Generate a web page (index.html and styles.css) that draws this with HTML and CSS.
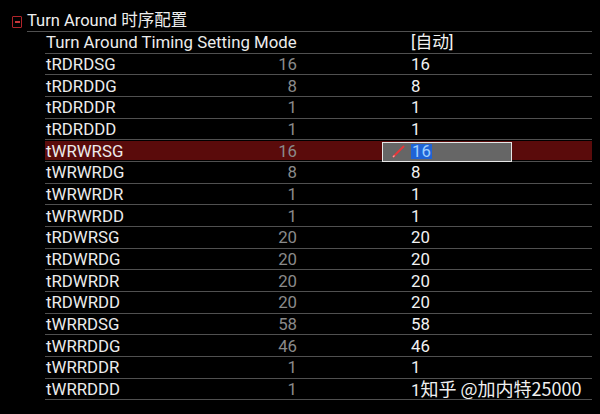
FILE: index.html
```html
<!DOCTYPE html>
<html>
<head>
<meta charset="utf-8">
<link rel="stylesheet" href="styles.css">
</head>
<body>
<div class="panel">
  <div class="title">
    <span class="fold"><span class="fold-bar"></span></span>
    <div class="title-text">Turn Around 时序配置</div>
  </div>
  <div class="rows">
    <div class="row"><span class="name">Turn Around Timing Setting Mode</span><span class="cur"></span><span class="val">[自动]</span></div>
    <div class="row"><span class="name">tRDRDSG</span><span class="cur">16</span><span class="val">16</span></div>
    <div class="row"><span class="name">tRDRDDG</span><span class="cur">8</span><span class="val">8</span></div>
    <div class="row"><span class="name">tRDRDDR</span><span class="cur">1</span><span class="val">1</span></div>
    <div class="row"><span class="name">tRDRDDD</span><span class="cur">1</span><span class="val">1</span></div>
    <div class="row sel"><span class="name">tWRWRSG</span><span class="cur">16</span><span class="val edit-cell"><span class="editbox"><svg class="pencil" width="13" height="13" viewBox="0 0 13 13"><path d="M1.5 11.5 L11.5 1.5" stroke="#e8383a" stroke-width="2" stroke-linecap="round"/><path d="M1 12 L2.5 10.5" stroke="#f5a0a0" stroke-width="1.2"/></svg><span class="seltext">16</span></span></span></div>
    <div class="row"><span class="name">tWRWRDG</span><span class="cur">8</span><span class="val">8</span></div>
    <div class="row"><span class="name">tWRWRDR</span><span class="cur">1</span><span class="val">1</span></div>
    <div class="row"><span class="name">tWRWRDD</span><span class="cur">1</span><span class="val">1</span></div>
    <div class="row"><span class="name">tRDWRSG</span><span class="cur">20</span><span class="val">20</span></div>
    <div class="row"><span class="name">tRDWRDG</span><span class="cur">20</span><span class="val">20</span></div>
    <div class="row"><span class="name">tRDWRDR</span><span class="cur">20</span><span class="val">20</span></div>
    <div class="row"><span class="name">tRDWRDD</span><span class="cur">20</span><span class="val">20</span></div>
    <div class="row"><span class="name">tWRRDSG</span><span class="cur">58</span><span class="val">58</span></div>
    <div class="row"><span class="name">tWRRDDG</span><span class="cur">46</span><span class="val">46</span></div>
    <div class="row"><span class="name">tWRRDDR</span><span class="cur">1</span><span class="val">1</span></div>
    <div class="row"><span class="name">tWRRDDD</span><span class="cur">1</span><span class="val">1<span class="mark">知乎 @加内特25000</span></span></div>
  </div>
</div>
</body>
</html>
```
FILE: styles.css
```css
html, body {
  margin: 0;
  padding: 0;
  background: #000;
}
body {
  width: 600px;
  height: 414px;
  overflow: hidden;
  font-family: Roboto, "Noto Sans CJK SC", sans-serif;
  color: #ececec;
}
.panel {
  padding-right: 8px;
}
.title {
  display: flex;
  align-items: stretch;
  height: 32px;
  padding-left: 12px;
}
.fold {
  width: 10px;
  height: 12px;
  box-sizing: border-box;
  border: 1.5px solid #b0242a;
  border-radius: 1px;
  margin-top: 16px;
  margin-right: 5px;
  display: flex;
  align-items: center;
  justify-content: center;
}
.fold-bar {
  width: 5px;
  height: 2px;
  background: #c8363a;
}
.title-text {
  flex: 1;
  font-size: 16.5px;
  line-height: 19px;
  padding-top: 11px;
  box-sizing: border-box;
  border-bottom: 1px solid #505050;
  color: #eeeeee;
}
.rows {
  margin-left: 45px;
}
.row {
  display: grid;
  grid-template-columns: 200px 52px 85px 1fr;
  height: 21.667px;
  box-sizing: border-box;
  border-bottom: 1px solid #505050;
  align-items: center;
  font-size: 16.8px;
  line-height: 18px;
  white-space: nowrap;
}
.name {
  grid-column: 1;
  padding-left: 1px;
}
.cur {
  grid-column: 2;
  text-align: right;
  color: #8a8a8a;
}
.val {
  grid-column: 4;
  padding-left: 29px;
  color: #f2f2f2;
}
.row.sel {
  background: linear-gradient(#000 0 1px, #5a0b0b 1px calc(100% - 1px), #000 calc(100% - 1px));
}
.edit-cell {
  padding-left: 0;
  align-self: end;
  height: 20px;
  margin-bottom: -1px;
}
.editbox {
  display: flex;
  align-items: center;
  width: 130px;
  height: 20px;
  box-sizing: border-box;
  border: 1.5px solid #e6e6e6;
  background: #666666;
  padding-left: 9px;
}
.pencil {
  margin-right: 6px;
}
.seltext {
  background: #1f63d6;
  color: #9fd0ff;
  line-height: 15px;
  padding: 0 1px;
}
.mark {
  color: #f0f0f0;
  font-family: "Noto Sans CJK SC", sans-serif;
  font-size: 18px;
  line-height: 18px;
}
```
